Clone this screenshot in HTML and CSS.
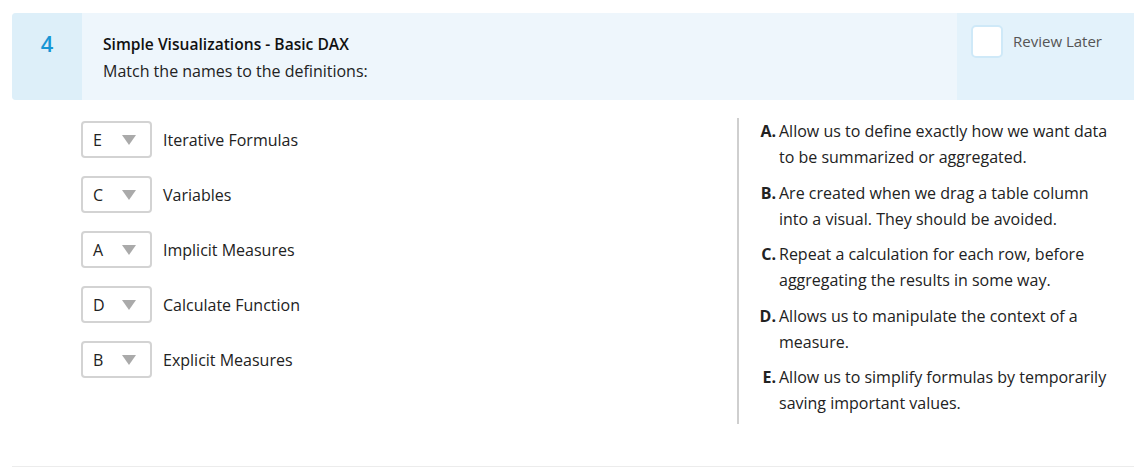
FILE: index.html
```html
<!DOCTYPE html>
<html>
<head>
<meta charset="utf-8">
<link rel="stylesheet" href="styles.css">
</head>
<body>
<div class="question">
  <div class="q-header">
    <div class="q-num">4</div>
    <div class="q-text">
      <div class="q-title">Simple Visualizations - Basic DAX</div>
      <div class="q-prompt">Match the names to the definitions:</div>
    </div>
    <div class="q-review">
      <span class="checkbox"></span>
      <span class="review-label">Review Later</span>
    </div>
  </div>
  <div class="q-body">
    <div class="matches">
      <div class="match-row"><div class="select"><span class="sel-val">E</span><span class="caret"></span></div><span class="term">Iterative Formulas</span></div>
      <div class="match-row"><div class="select"><span class="sel-val">C</span><span class="caret"></span></div><span class="term">Variables</span></div>
      <div class="match-row"><div class="select"><span class="sel-val">A</span><span class="caret"></span></div><span class="term">Implicit Measures</span></div>
      <div class="match-row"><div class="select"><span class="sel-val">D</span><span class="caret"></span></div><span class="term">Calculate Function</span></div>
      <div class="match-row"><div class="select"><span class="sel-val">B</span><span class="caret"></span></div><span class="term">Explicit Measures</span></div>
    </div>
    <div class="defs">
      <div class="def"><span class="def-key">A.</span><span class="def-text">Allow us to define exactly how we want data to be summarized or aggregated.</span></div>
      <div class="def"><span class="def-key">B.</span><span class="def-text">Are created when we drag a table column into a visual. They should be avoided.</span></div>
      <div class="def"><span class="def-key">C.</span><span class="def-text">Repeat a calculation for each row, before aggregating the results in some way.</span></div>
      <div class="def"><span class="def-key">D.</span><span class="def-text">Allows us to manipulate the context of a measure.</span></div>
      <div class="def"><span class="def-key">E.</span><span class="def-text">Allow us to simplify formulas by temporarily saving important values.</span></div>
    </div>
  </div>
  <div class="q-footer"></div>
</div>
</body>
</html>
```
FILE: styles.css
```css
html, body {
  margin: 0;
  padding: 0;
  background: #ffffff;
}
body {
  font-family: "Open Sans", "Liberation Sans", sans-serif;
  color: #222;
}
.question {
  padding: 13px 0 0 12px;
}
.q-header {
  display: flex;
  height: 87px;
  background: #eef6fc;
  border-radius: 4px 0 0 4px;
  overflow: hidden;
}
.q-num {
  width: 70px;
  flex: none;
  background: #ddeff9;
  color: #1796d5;
  font-size: 22px;
  font-weight: 600;
  text-align: center;
  padding-top: 15px;
  box-sizing: border-box;
  line-height: 30px;
}
.q-text {
  flex: 1;
  padding: 19px 0 0 21px;
}
.q-title {
  font-size: 15.6px;
  font-weight: 600;
  color: #111;
  line-height: 24px;
}
.q-prompt {
  font-size: 16px;
  color: #222;
  line-height: 24px;
  margin-top: 3px;
}
.q-review {
  width: 177px;
  flex: none;
  background: #e3f2fb;
  display: flex;
  align-items: flex-start;
  padding: 12px 0 0 14px;
  box-sizing: border-box;
}
.checkbox {
  width: 32px;
  height: 33px;
  box-sizing: border-box;
  border: 2px solid #cfe9f8;
  background: #fff;
  border-radius: 5px;
  flex: none;
}
.review-label {
  margin-left: 10px;
  font-size: 15px;
  color: #555;
  line-height: 33px;
}
.q-body {
  display: flex;
  padding-top: 20px;
}
.matches {
  width: 725px;
  flex: none;
  padding-left: 69px;
  box-sizing: border-box;
  display: flex;
  flex-direction: column;
  gap: 18px;
  padding-top: 1px;
}
.match-row {
  display: flex;
  align-items: center;
}
.select {
  width: 71px;
  height: 37px;
  box-sizing: border-box;
  border: 2px solid #d3d3d3;
  border-radius: 4px;
  display: flex;
  align-items: center;
  padding-left: 10px;
  font-size: 16px;
  color: #222;
}
.sel-val {
  width: 29px;
}
.caret {
  width: 0;
  height: 0;
  border-left: 7px solid transparent;
  border-right: 7px solid transparent;
  border-top: 10px solid #aaaaaa;
}
.term {
  margin-left: 11px;
  font-size: 16px;
  color: #222;
}
.defs {
  border-left: 2px solid #cfcfcf;
  padding: 0 0 0 17px;
  width: 375px;
  display: flex;
  flex-direction: column;
  gap: 9.5px;
  height: 306px;
  box-sizing: border-box;
  margin-top: -2px;
}
.def {
  display: flex;
  font-size: 16px;
  line-height: 26px;
  color: #222;
}
.def-key {
  font-weight: 700;
  width: 20px;
  flex: none;
  text-align: right;
  margin-right: 3px;
}
.def-text {
  width: 335px;
  flex: none;
}
.q-footer {
  margin-top: 42px;
  border-top: 1px solid #ececec;
}
```
